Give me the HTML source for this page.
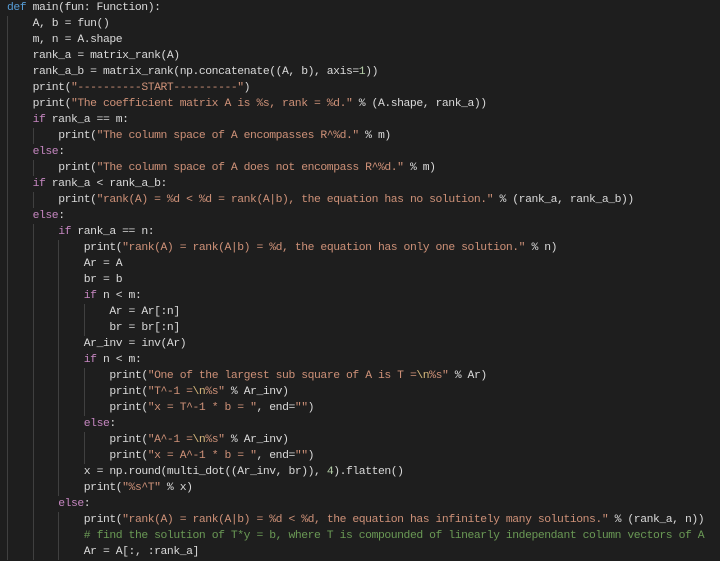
<!DOCTYPE html>
<html><head><meta charset="utf-8"><style>
body{margin:0;background:#1e1e1e;width:720px;height:561px;overflow:hidden}
.code{margin:0;padding:0 0 0 7px;font-family:"Liberation Mono",monospace;font-size:11.4px;letter-spacing:-0.44px;line-height:16px;color:#dadada}
.l{height:16px;white-space:pre}
.g{display:inline-block;width:25.6px;height:16px;vertical-align:top;box-shadow:inset 1px 0 0 #404040;letter-spacing:0}
.k{color:#569cd6}.c{color:#c586c0}.s{color:#ce9178}.m{color:#6a9955}.n{color:#b5cea8}.e{color:#d7ba7d}
</style></head><body><div class="code"><div class="l"><span class="k">def</span> main(fun: Function):</div><div class="l"><span class="g"></span>A, b = fun()</div><div class="l"><span class="g"></span>m, n = A.shape</div><div class="l"><span class="g"></span>rank_a = matrix_rank(A)</div><div class="l"><span class="g"></span>rank_a_b = matrix_rank(np.concatenate((A, b), axis=<span class="n">1</span>))</div><div class="l"><span class="g"></span>print(<span class="s">"----------START----------"</span>)</div><div class="l"><span class="g"></span>print(<span class="s">"The coefficient matrix A is %s, rank = %d."</span> % (A.shape, rank_a))</div><div class="l"><span class="g"></span><span class="c">if</span> rank_a == m:</div><div class="l"><span class="g"></span><span class="g"></span>print(<span class="s">"The column space of A encompasses R^%d."</span> % m)</div><div class="l"><span class="g"></span><span class="c">else</span>:</div><div class="l"><span class="g"></span><span class="g"></span>print(<span class="s">"The column space of A does not encompass R^%d."</span> % m)</div><div class="l"><span class="g"></span><span class="c">if</span> rank_a &lt; rank_a_b:</div><div class="l"><span class="g"></span><span class="g"></span>print(<span class="s">"rank(A) = %d &lt; %d = rank(A|b), the equation has no solution."</span> % (rank_a, rank_a_b))</div><div class="l"><span class="g"></span><span class="c">else</span>:</div><div class="l"><span class="g"></span><span class="g"></span><span class="c">if</span> rank_a == n:</div><div class="l"><span class="g"></span><span class="g"></span><span class="g"></span>print(<span class="s">"rank(A) = rank(A|b) = %d, the equation has only one solution."</span> % n)</div><div class="l"><span class="g"></span><span class="g"></span><span class="g"></span>Ar = A</div><div class="l"><span class="g"></span><span class="g"></span><span class="g"></span>br = b</div><div class="l"><span class="g"></span><span class="g"></span><span class="g"></span><span class="c">if</span> n &lt; m:</div><div class="l"><span class="g"></span><span class="g"></span><span class="g"></span><span class="g"></span>Ar = Ar[:n]</div><div class="l"><span class="g"></span><span class="g"></span><span class="g"></span><span class="g"></span>br = br[:n]</div><div class="l"><span class="g"></span><span class="g"></span><span class="g"></span>Ar_inv = inv(Ar)</div><div class="l"><span class="g"></span><span class="g"></span><span class="g"></span><span class="c">if</span> n &lt; m:</div><div class="l"><span class="g"></span><span class="g"></span><span class="g"></span><span class="g"></span>print(<span class="s">"One of the largest sub square of A is T =<span class="e">\n</span>%s"</span> % Ar)</div><div class="l"><span class="g"></span><span class="g"></span><span class="g"></span><span class="g"></span>print(<span class="s">"T^-1 =<span class="e">\n</span>%s"</span> % Ar_inv)</div><div class="l"><span class="g"></span><span class="g"></span><span class="g"></span><span class="g"></span>print(<span class="s">"x = T^-1 * b = "</span>, end=<span class="s">""</span>)</div><div class="l"><span class="g"></span><span class="g"></span><span class="g"></span><span class="c">else</span>:</div><div class="l"><span class="g"></span><span class="g"></span><span class="g"></span><span class="g"></span>print(<span class="s">"A^-1 =<span class="e">\n</span>%s"</span> % Ar_inv)</div><div class="l"><span class="g"></span><span class="g"></span><span class="g"></span><span class="g"></span>print(<span class="s">"x = A^-1 * b = "</span>, end=<span class="s">""</span>)</div><div class="l"><span class="g"></span><span class="g"></span><span class="g"></span>x = np.round(multi_dot((Ar_inv, br)), <span class="n">4</span>).flatten()</div><div class="l"><span class="g"></span><span class="g"></span><span class="g"></span>print(<span class="s">"%s^T"</span> % x)</div><div class="l"><span class="g"></span><span class="g"></span><span class="c">else</span>:</div><div class="l"><span class="g"></span><span class="g"></span><span class="g"></span>print(<span class="s">"rank(A) = rank(A|b) = %d &lt; %d, the equation has infinitely many solutions."</span> % (rank_a, n))</div><div class="l"><span class="g"></span><span class="g"></span><span class="g"></span><span class="m"># find the solution of T*y = b, where T is compounded of linearly independant column vectors of A</span></div><div class="l"><span class="g"></span><span class="g"></span><span class="g"></span>Ar = A[:, :rank_a]</div></div></body></html>
